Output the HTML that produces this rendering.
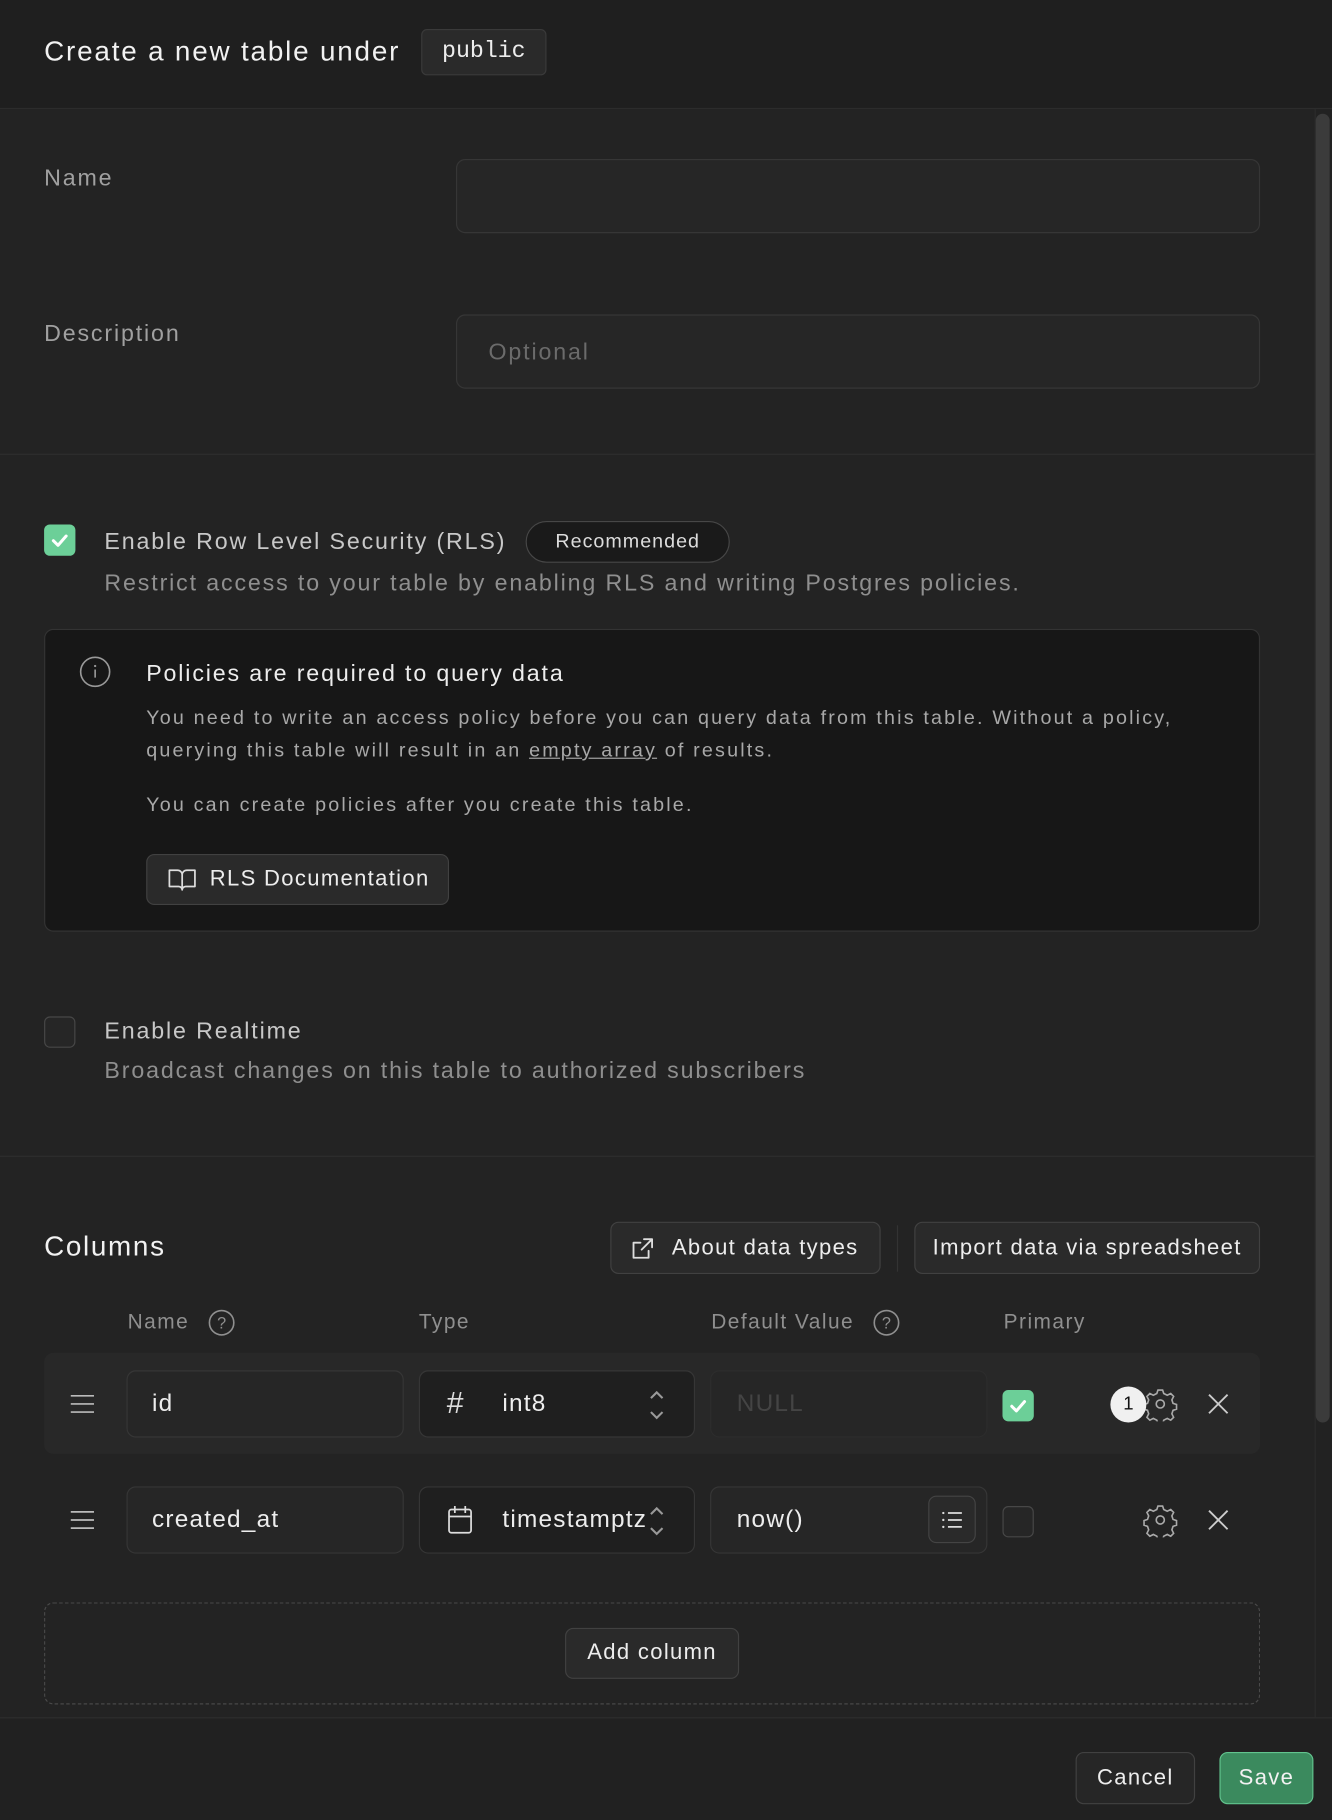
<!DOCTYPE html>
<html><head><meta charset="utf-8"><style>
html,body{margin:0;padding:0;background:#232323;overflow:hidden;width:1332px;height:1820px}
#w{position:absolute;left:0;top:0;width:1148px;height:1568px;transform:scale(1.16028);transform-origin:0 0;background:#232323;font-family:"Liberation Sans",sans-serif;color:#ededed;letter-spacing:0.1em}
.a{position:absolute}
.t{position:absolute;white-space:nowrap;line-height:1}
.inp{position:absolute;background:#262626;border:1px solid #363636;border-radius:8px;box-sizing:border-box}
.btn{position:absolute;background:#2a2a2a;border:1px solid #414141;border-radius:7px;box-sizing:border-box;color:#ededed;font-size:19px;display:flex;align-items:center;justify-content:center;white-space:nowrap;letter-spacing:0.06em}
.hr{position:absolute;left:0;width:1133px;height:1px;background:#2e2e2e}
.h{letter-spacing:0.07em}
svg{position:absolute}
</style></head><body><div id="w">
<div class="a" style="left:0;top:0;width:1148px;height:93px;background:#1f1f1f;border-bottom:1px solid #2c2c2c"></div>
<div class="t" style="left:38px;top:33px;font-size:24px;color:#f2f2f2;letter-spacing:0.065em">Create a new table under</div>
<div class="a" style="left:363px;top:25px;width:108px;height:40px;box-sizing:border-box;background:#2a2a2a;border:1px solid #3a3a3a;border-radius:5px;font-family:'Liberation Mono',monospace;font-size:20px;color:#ededed;text-align:center;line-height:38px;letter-spacing:0">public</div>
<div class="a" style="left:1133px;top:94px;width:15px;height:1386px;background:#222;border-left:1px solid #2c2c2c"></div>
<div class="a" style="left:1134px;top:98px;width:12px;height:1128px;background:#3b3b3b;border-radius:6px"></div>

<div class="t" style="left:38px;top:144px;font-size:20px;color:#a0a0a0">Name</div>
<div class="inp" style="left:393px;top:137px;width:693px;height:64px"></div>
<div class="t" style="left:38px;top:278px;font-size:20px;color:#a0a0a0">Description</div>
<div class="inp" style="left:393px;top:271px;width:693px;height:64px"></div>
<div class="t" style="left:421px;top:294px;font-size:20px;color:#6b6b6b">Optional</div>
<div class="hr" style="top:391px"></div>

<div class="a" style="left:38px;top:452px;width:27px;height:27px;background:#6ccf98;border-radius:5px"></div>
<svg style="left:38px;top:452px" width="27" height="27"><path d="M8 14l4 4 7-8" stroke="#fff" stroke-width="2.6" fill="none" stroke-linecap="round" stroke-linejoin="round"/></svg>
<div class="t" style="left:90px;top:457px;font-size:20px;color:#c8c8c8;letter-spacing:0.08em">Enable Row Level Security (RLS)</div>
<div class="a" style="left:453px;top:449px;width:176px;height:36px;box-sizing:border-box;background:#1a1a1a;border:1px solid #474747;border-radius:18px;font-size:17px;color:#dcdcdc;text-align:center;line-height:34px;letter-spacing:0.05em">Recommended</div>
<div class="t" style="left:90px;top:493px;font-size:20px;color:#8f8f8f">Restrict access to your table by enabling RLS and writing Postgres policies.</div>

<div class="a" style="left:38px;top:542px;width:1048px;height:261px;box-sizing:border-box;background:#171717;border:1px solid #333;border-radius:8px"></div>
<svg style="left:68px;top:565px" width="28" height="28"><circle cx="14" cy="14" r="12.5" stroke="#999" stroke-width="1.4" fill="none"/><path d="M14 12v7" stroke="#999" stroke-width="1.4"/><circle cx="14" cy="9" r="1" fill="#999"/></svg>
<div class="t" style="left:126px;top:571px;font-size:20px;color:#ededed;letter-spacing:0.08em">Policies are required to query data</div>
<div class="t" style="left:126px;top:610px;font-size:17px;color:#a8a8a8;letter-spacing:0.11em">You need to write an access policy before you can query data from this table. Without a policy,</div>
<div class="t" style="left:126px;top:638px;font-size:17px;color:#a8a8a8;letter-spacing:0.11em">querying this table will result in an <u>empty array</u> of results.</div>
<div class="t" style="left:126px;top:685px;font-size:17px;color:#a8a8a8;letter-spacing:0.11em">You can create policies after you create this table.</div>
<div class="btn" style="left:126px;top:736px;width:261px;height:44px;font-size:19px;padding-left:38px">RLS Documentation</div>
<svg style="left:144px;top:746px" width="26" height="24"><path d="M2 4h7a4 4 0 0 1 4 4v13a3 3 0 0 0-3-3H2zM24 4h-7a4 4 0 0 0-4 4v13a3 3 0 0 1 3-3h8z" stroke="#ddd" stroke-width="1.5" fill="none" stroke-linejoin="round"/></svg>

<div class="a" style="left:38px;top:876px;width:27px;height:27px;box-sizing:border-box;background:#262626;border:1px solid #474747;border-radius:5px"></div>
<div class="t" style="left:90px;top:879px;font-size:20px;color:#c8c8c8">Enable Realtime</div>
<div class="t" style="left:90px;top:913px;font-size:20px;color:#8f8f8f">Broadcast changes on this table to authorized subscribers</div>
<div class="hr" style="top:996px"></div>

<div class="t" style="left:38px;top:1063px;font-size:24px;color:#f2f2f2;letter-spacing:0.06em">Columns</div>
<div class="btn" style="left:526px;top:1053px;width:233px;height:45px;padding-left:34px">About data types</div>
<svg style="left:543px;top:1065px" width="22" height="22"><path d="M12 3h7v7M19 3l-9 9M16 13v6H3V6h6" stroke="#ddd" stroke-width="1.6" fill="none" stroke-linecap="round" stroke-linejoin="round"/></svg>
<div class="a" style="left:773px;top:1056px;width:1px;height:40px;background:#333"></div>
<div class="btn" style="left:788px;top:1053px;width:298px;height:45px">Import data via spreadsheet</div>

<div class="t h" style="left:110px;top:1130px;font-size:18px;color:#8f8f8f">Name</div>
<svg style="left:179px;top:1128px" width="24" height="24"><circle cx="12" cy="12" r="10.5" stroke="#8f8f8f" stroke-width="1.4" fill="none"/><text x="12" y="17" font-size="14" fill="#8f8f8f" text-anchor="middle" font-family="Liberation Sans" letter-spacing="0">?</text></svg>
<div class="t h" style="left:361px;top:1130px;font-size:18px;color:#8f8f8f">Type</div>
<div class="t h" style="left:613px;top:1130px;font-size:18px;color:#8f8f8f">Default Value</div>
<svg style="left:752px;top:1128px" width="24" height="24"><circle cx="12" cy="12" r="10.5" stroke="#8f8f8f" stroke-width="1.4" fill="none"/><text x="12" y="17" font-size="14" fill="#8f8f8f" text-anchor="middle" font-family="Liberation Sans" letter-spacing="0">?</text></svg>
<div class="t h" style="left:865px;top:1130px;font-size:18px;color:#8f8f8f">Primary</div>

<div class="a" style="left:38px;top:1166px;width:1048px;height:87px;background:#282828;border-radius:8px"></div>
<svg style="left:60px;top:1200px" width="22" height="20"><path d="M1 3h20M1 10h20M1 17h20" stroke="#bbb" stroke-width="1.5"/></svg>
<div class="inp" style="left:109px;top:1181px;width:239px;height:58px"></div>
<div class="t" style="left:131px;top:1199px;font-size:21px;letter-spacing:0.05em">id</div>
<div class="inp" style="left:361px;top:1181px;width:238px;height:58px;background:#1f1f1f"></div>
<div class="t" style="left:385px;top:1196px;font-size:26px;color:#ddd;letter-spacing:0">#</div>
<div class="t" style="left:433px;top:1199px;font-size:21px;letter-spacing:0.05em">int8</div>
<svg style="left:557px;top:1197px" width="18" height="28"><path d="M4 8l5-5 5 5M4 20l5 5 5-5" stroke="#999" stroke-width="1.8" fill="none"/></svg>
<div class="inp" style="left:612px;top:1181px;width:239px;height:58px;background:#262626;border-color:#2c2c2c"></div>
<div class="t" style="left:635px;top:1199px;font-size:21px;color:#444;letter-spacing:0.05em">NULL</div>
<div class="a" style="left:864px;top:1198px;width:27px;height:27px;background:#6ccf98;border-radius:5px"></div>
<svg style="left:864px;top:1198px" width="27" height="27"><path d="M8 14l4 4 7-8" stroke="#fff" stroke-width="2.6" fill="none" stroke-linecap="round" stroke-linejoin="round"/></svg>
<svg style="left:985px;top:1195px" width="30" height="30"><g stroke="#aaa" stroke-width="1.4" fill="none"><circle cx="15" cy="15" r="3.5"/><path d="M13 3h4l1 3 3 1.5 3-1.5 2.5 2.5-1.5 3 1 3 3 1v4l-3 1-1 3 1.5 3-2.5 2.5-3-1.5-3 1.5-1 3h-4l-1-3-3-1.5-3 1.5-2.5-2.5 1.5-3-1-3-3-1v-4l3-1 1-3-1.5-3L6 6l3 1.5L12 6z"/></g></svg>
<div class="a" style="left:957px;top:1195px;width:31px;height:31px;border-radius:50%;background:#f0f0f0;color:#111;font-size:16px;text-align:center;line-height:31px;letter-spacing:0">1</div>
<svg style="left:1039px;top:1199px" width="22" height="22"><path d="M3 3l16 16M19 3L3 19" stroke="#ccc" stroke-width="1.6"/></svg>

<svg style="left:60px;top:1300px" width="22" height="20"><path d="M1 3h20M1 10h20M1 17h20" stroke="#bbb" stroke-width="1.5"/></svg>
<div class="inp" style="left:109px;top:1281px;width:239px;height:58px"></div>
<div class="t" style="left:131px;top:1299px;font-size:21px;letter-spacing:0.05em">created_at</div>
<div class="inp" style="left:361px;top:1281px;width:238px;height:58px;background:#1f1f1f"></div>
<svg style="left:385px;top:1297px" width="24" height="26"><rect x="2" y="4" width="19" height="20" rx="2" stroke="#ddd" stroke-width="1.5" fill="none"/><path d="M2 10h19M7 1v6M16 1v6" stroke="#ddd" stroke-width="1.5"/></svg>
<div class="t" style="left:433px;top:1299px;font-size:21px;letter-spacing:0.05em">timestamptz</div>
<svg style="left:557px;top:1297px" width="18" height="28"><path d="M4 8l5-5 5 5M4 20l5 5 5-5" stroke="#999" stroke-width="1.8" fill="none"/></svg>
<div class="inp" style="left:612px;top:1281px;width:239px;height:58px"></div>
<div class="t" style="left:635px;top:1299px;font-size:21px;letter-spacing:0.05em">now()</div>
<div class="a" style="left:800px;top:1289px;width:41px;height:41px;box-sizing:border-box;background:#2a2a2a;border:1px solid #444;border-radius:7px"></div>
<svg style="left:810px;top:1299px" width="22" height="22"><path d="M7 5h12M7 11h12M7 17h12" stroke="#ddd" stroke-width="1.5"/><circle cx="3" cy="5" r="1" fill="#ddd"/><circle cx="3" cy="11" r="1" fill="#ddd"/><circle cx="3" cy="17" r="1" fill="#ddd"/></svg>
<div class="a" style="left:864px;top:1298px;width:27px;height:27px;box-sizing:border-box;background:#262626;border:1px solid #474747;border-radius:5px"></div>
<svg style="left:985px;top:1295px" width="30" height="30"><g stroke="#aaa" stroke-width="1.4" fill="none"><circle cx="15" cy="15" r="3.5"/><path d="M13 3h4l1 3 3 1.5 3-1.5 2.5 2.5-1.5 3 1 3 3 1v4l-3 1-1 3 1.5 3-2.5 2.5-3-1.5-3 1.5-1 3h-4l-1-3-3-1.5-3 1.5-2.5-2.5 1.5-3-1-3-3-1v-4l3-1 1-3-1.5-3L6 6l3 1.5L12 6z"/></g></svg>
<svg style="left:1039px;top:1299px" width="22" height="22"><path d="M3 3l16 16M19 3L3 19" stroke="#ccc" stroke-width="1.6"/></svg>

<div class="a" style="left:38px;top:1381px;width:1048px;height:88px;box-sizing:border-box;border:1px dashed #4a4a4a;border-radius:8px"></div>
<div class="btn" style="left:487px;top:1403px;width:150px;height:44px">Add column</div>

<div class="a" style="left:0;top:1480px;width:1148px;height:88px;background:#212121;border-top:1px solid #2e2e2e"></div>
<div class="btn" style="left:927px;top:1510px;width:103px;height:45px;background:#262626">Cancel</div>
<div class="btn" style="left:1051px;top:1510px;width:81px;height:45px;background:#3b8a5e;border-color:#62c48e;color:#f2f2f2">Save</div>
</div></body></html>
